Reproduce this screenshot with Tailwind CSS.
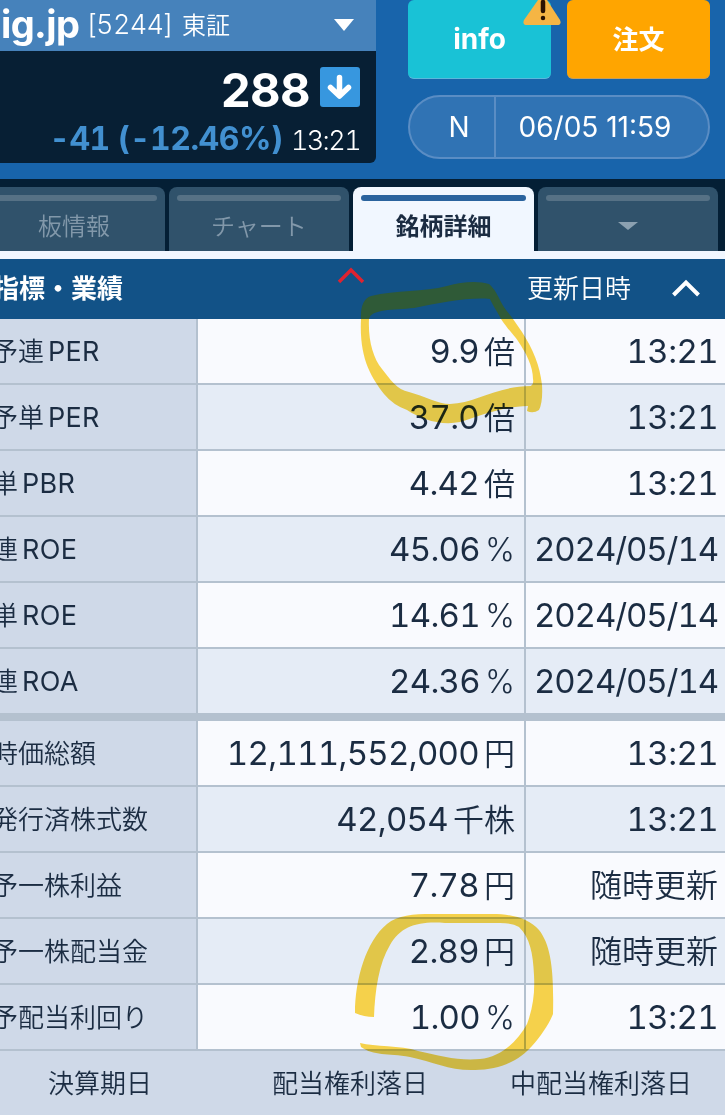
<!DOCTYPE html>
<html lang="ja">
<head>
    <meta charset="UTF-8">
    <meta name="viewport" content="width=device-width, initial-scale=1.0">
    <title>銘柄詳細</title>
    <script src="https://cdn.jsdelivr.net/npm/@tailwindcss/browser@4"></script>
</head>
<body class="relative w-[725px] h-[1115px] overflow-hidden bg-[#cfd9e8] text-[#1b2c42] font-['Inter','Noto_Sans_CJK_JP',sans-serif]">
    <!-- Header -->
    <header class="flex h-[179px] bg-[#1864ab]">
        <div class="w-[376px] h-[163px] shrink-0 rounded-br-md overflow-hidden bg-[#071f34] text-white">
            <div class="flex items-center h-[51px] bg-[#4682bb] pr-[22px] whitespace-nowrap">
                <span class="pl-px -mt-[3px] text-[38px] font-bold leading-none tracking-[-0.6px]">ig.jp</span>
                <span class="ml-[7px] -mt-[3px] text-[27px] font-light leading-none tabular-nums tracking-[-0.7px]">[5244]</span>
                <span class="ml-[9px] text-[24px] font-[350] leading-none">東証</span>
                <svg class="ml-auto -mt-[2px]" width="20" height="12" viewBox="0 0 20 12"><path d="M0 0h20L10 12z" fill="#fff"/></svg>
            </div>
            <div class="flex justify-end items-center h-10 mt-4 pr-4">
                <span class="text-[47px] font-bold leading-none tracking-[-0.6px] mt-[4px]">288</span>
                <svg class="ml-[10px]" width="40" height="40" viewBox="0 0 40 40">
                    <rect width="40" height="40" rx="3" fill="#3797df"/>
                    <path d="M19.500 10.500v18M10.500 20.500l9 8.500 9-8.500" fill="none" stroke="#fff" stroke-width="5.500" stroke-linecap="round" stroke-linejoin="round"/>
                </svg>
            </div>
            <div class="flex justify-end items-baseline pr-4 mt-[16px] whitespace-nowrap">
                <span class="text-[32px] font-bold leading-none tabular-nums tracking-[-0.5px] text-[#4290d0]">-41 (-12.46%)</span>
                <span class="ml-[8px] text-[27px] font-light leading-none tabular-nums tracking-[-1.6px]">13:21</span>
            </div>
        </div>
        <div class="ml-8 w-[302px]">
            <div class="flex gap-4 text-white">
                <div class="relative flex justify-center items-center w-[143px] h-[79px] rounded-md bg-[#19c2d6] border-b border-[#5ab8dc] text-[28px] font-bold">
                    info
                    <svg class="absolute left-[115px] top-0" width="40" height="25" viewBox="0 0 40 25">
                        <path d="M15 0h9l13 20q2 5-3 5H4q-5 0-3-5z" fill="#f5b544"/>
                        <path d="M20 2v9M20 18v.1" stroke="#2b1200" stroke-width="4.500" stroke-linecap="round"/>
                    </svg>
                </div>
                <div class="flex justify-center items-center w-[143px] h-[79px] rounded-md bg-[#ffa500] border-b border-[#c89f58] text-[26px] font-bold">注文</div>
            </div>
            <div class="flex mt-4 h-16 rounded-full border-2 border-[#5a8dc4] bg-[#3073b4] text-white text-[28px]">
                <div class="flex justify-center items-center w-[86px] pl-[14px] border-r-2 border-[#5a8dc4]">N</div>
                <div class="flex justify-center items-center flex-1 pr-[14px] whitespace-nowrap">06/05 11:59</div>
            </div>
        </div>
    </header>

    <!-- Tabs -->
    <nav class="flex gap-1 h-[72px] pt-2 bg-[#041f35] text-[#8298aa] text-[24px]">
        <div class="w-[165px] shrink-0 rounded-tr-lg bg-[#30526b] pt-2 pr-2">
            <div class="h-[6px] rounded-r-full bg-[#567185]"></div>
            <div class="pl-[38px] mt-[8px] leading-[36px] font-[350]">板情報</div>
        </div>
        <div class="w-[180px] shrink-0 rounded-t-lg bg-[#30526b] pt-2 px-2 text-center">
            <div class="h-[6px] rounded-full bg-[#567185]"></div>
            <div class="mt-[8px] leading-[36px] font-[350]">チャート</div>
        </div>
        <div class="w-[181px] shrink-0 rounded-t-lg bg-[#f1f7ff] pt-2 px-2 text-center text-[#1b2c42]">
            <div class="h-[6px] rounded-full bg-[#2a639e]"></div>
            <div class="mt-[8px] leading-[36px] font-bold">銘柄詳細</div>
        </div>
        <div class="w-[180px] shrink-0 rounded-t-lg bg-[#30526b] pt-2 px-2">
            <div class="h-[6px] rounded-full bg-[#567185]"></div>
            <svg class="mx-auto mt-[21px]" width="20" height="8" viewBox="0 0 20 8"><path d="M0 0h20L10 8z" fill="#8ba0b0"/></svg>
        </div>
    </nav>
    <div class="h-2 bg-[#f1f7ff]"></div>

    <!-- Section title -->
    <div class="flex items-center h-[60px] pr-[25px] bg-[#125287] text-white text-[26px] whitespace-nowrap">
        <h2 class="-ml-[7px] font-bold leading-none">指標・業績</h2>
        <span class="ml-auto font-[350] leading-none">更新日時</span>
        <svg class="ml-[41px] -mt-[2px]" width="28" height="18" viewBox="0 0 28 18"><path d="M1.500 16L14 3.500 26.500 16" fill="none" stroke="#fff" stroke-width="4"/></svg>
    </div>

    <div id="rows"></div>

    <!-- Next table head -->
    <div class="flex h-16 items-center pt-px text-[26px] font-[350] whitespace-nowrap">
        <span class="w-[152px] pl-[48px]">決算期日</span>
        <span class="ml-[120px]">配当権利落日</span>
        <span class="ml-[82px]">中配当権利落日</span>
    </div>

    <!-- Pen marks, darker where they run over the section title -->
    <svg class="absolute left-0 top-0" width="725" height="319" viewBox="0 0 725 319">
        <path d="M361 319Q360 300 371 296C396 290 424 292 447 286C463 281 480 281 489 284Q494 288 499 298C504 309 509 313 513 319H501C497 311 492 304 490 299C469 297 440 303 414 308C393 310 371 309 369 319Z" fill="#2f5a37"/>
    </svg>
    <svg class="absolute left-0 top-[319px] mix-blend-multiply" width="725" height="796" viewBox="0 319 725 796">
        <g fill="#fbd340" fill-opacity="0.940">
            <path d="M361 319C359 358 371 377 384 394Q393 405 407 410C421 419 440 426 460 422C480 416 499 407 528 406L527 411Q533 414 539 410Q543 402 542 385C540 366 533 349 522 332L513 319H501C509 331 514 335 518 341C526 353 533 366 533 379Q534 384 531 386C497 386 476 403 450 404C438 404 424 396 409 392C397 390 390 379 382 369C373 358 368 340 369 319Z"/>
            <path d="M355 1013C355 980 366 941 387 924C401 912 425 914 450 914H492C514 914 529 919 539 930C551 945 554 971 553 1014C549 1024 541 1036 532 1046C520 1060 500 1070 475 1070C450 1071 434 1062 410 1057C387 1053 374 1056 361 1047L360 1043C375 1047 400 1045 418 1051C440 1056 459 1061 480 1059C501 1057 518 1041 527 1024C533 1008 535 993 534 975C533 953 530 938 519 927Q512 923 500 923H445C418 921 401 926 390 945C379 963 375 990 374 1017Q364 1017 355 1013Z"/>
        </g>
    </svg>
    <svg class="absolute left-[336px] top-[265px]" width="30" height="22" viewBox="0 0 30 22"><path d="M3 17L15 5 27 17" fill="none" stroke="#df2330" stroke-width="3.500"/></svg>

    <script>
        // [label, latin part, value, unit, updated]
        const rows = [
            ['予連', 'PER', '9.9', '倍', '13:21'],
            ['予単', 'PER', '37.0', '倍', '13:21'],
            ['単', 'PBR', '4.42', '倍', '13:21'],
            ['連', 'ROE', '45.06', '%', '2024/05/14'],
            ['単', 'ROE', '14.61', '%', '2024/05/14'],
            ['連', 'ROA', '24.36', '%', '2024/05/14'],
            ['時価総額', '', '12,111,552,000', '円', '13:21'],
            ['発行済株式数', '', '42,054', '千株', '13:21'],
            ['予一株利益', '', '7.78', '円', '随時更新'],
            ['予一株配当金', '', '2.89', '円', '随時更新'],
            ['予配当利回り', '', '1.00', '%', '13:21']
        ];

        document.getElementById('rows').innerHTML = rows.map(([label, latin, value, unit, date], i) => {
            const line = i === 5 ? 'h-[72px] border-b-8' : 'h-[66px] border-b-2';
            const bg = i % 2 ? 'bg-[#e5ecf6]' : 'bg-[#f9fafe]';
            const unitStyle = unit === '%' ? 'text-[32px] font-[350]' : 'text-[31px] font-[350]';
            const dateStyle = date === '随時更新' ? 'text-[32px] font-[350]' : date === '13:21' ? 'text-[33px] tabular-nums tracking-[-0.6px]' : 'text-[33px] tabular-nums tracking-[-1.1px]';
            return `
            <div class="flex ${line} border-[#b4c1cf] ${bg} whitespace-nowrap">
                <div class="flex items-center w-[198px] shrink-0 border-r-2 border-[#b4c1cf] bg-[#cfd9e8] text-[26px]">
                    <span class="-ml-2 font-[350]">${label}</span><span class="ml-[4px] pt-[2px] text-[27px] tracking-[0.3px]">${latin}</span>
                </div>
                <div class="flex justify-end items-center w-[328px] shrink-0 pt-[2px] pr-[9px] border-r-2 border-[#b4c1cf]">
                    <span class="text-[33px] tabular-nums tracking-[-0.7px]">${value}</span><span class="ml-[5px] ${unitStyle}">${unit}</span>
                </div>
                <div class="flex justify-end items-center flex-1 pt-[2px] pr-[7px] ${dateStyle}">${date}</div>
            </div>`;
        }).join('');
    </script>
</body>
</html>
